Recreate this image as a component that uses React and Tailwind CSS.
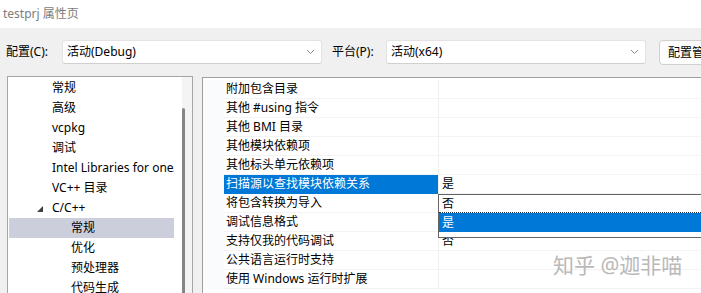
const FONT = { fontFamily: '"Noto Sans", "Noto Sans CJK SC", sans-serif' };

const treeItems = [
  { text: '常规' },
  { text: '高级' },
  { text: 'vcpkg' },
  { text: '调试' },
  { text: 'Intel Libraries for oneAPI' },
  { text: 'VC++ 目录' },
  { text: 'C/C++', expanded: true },
  { text: '常规', child: true, selected: true },
  { text: '优化', child: true },
  { text: '预处理器', child: true },
  { text: '代码生成', child: true },
];

const props = [
  { name: '附加包含目录' },
  { name: '其他 #using 指令' },
  { name: '其他 BMI 目录' },
  { name: '其他模块依赖项' },
  { name: '其他标头单元依赖项' },
  { name: '扫描源以查找模块依赖关系', value: '是', selected: true },
  { name: '将包含转换为导入' },
  { name: '调试信息格式' },
  { name: '支持仅我的代码调试', value: '否' },
  { name: '公共语言运行时支持' },
  { name: '使用 Windows 运行时扩展' },
];

const Chevron = () => (
  <svg width="9" height="6" viewBox="0 0 9 6" className="shrink-0">
    <path d="M1 1l3.5 3.5L8 1" fill="none" stroke="#8a8a8a" strokeWidth="1" />
  </svg>
);

const Combo = ({ value }) => (
  <div className="w-[260px] h-[24px] shrink-0 bg-white border border-[#e3e3e3] border-b-[#d0d0d0] rounded-[3px] flex items-center pl-[4px] pr-[6px]">
    <span className="flex-1 text-[12px] leading-[16px] text-black">{value}</span>
    <Chevron />
  </div>
);

const App = () => {
  return (
    <div className="w-[701px] h-[293px] overflow-hidden bg-[#f0f0f0] relative" style={FONT}>
      {/* Title bar */}
      <div className="h-[28px] bg-white flex items-center pl-[3px]">
        <span className="text-[12px] leading-[16px] text-[#7d7d7d]">testprj 属性页</span>
      </div>

      {/* Config row */}
      <div className="h-[48px] flex items-start pt-[12px] whitespace-nowrap">
        <div className="w-[62px] h-[24px] shrink-0 flex items-center pl-[6px]">
          <span className="text-[12px] leading-[16px] text-black">配置(C):</span>
        </div>
        <Combo value="活动(Debug)" />
        <div className="w-[64px] h-[24px] shrink-0 flex items-center pl-[10px]">
          <span className="text-[12px] leading-[16px] text-black">平台(P):</span>
        </div>
        <Combo value="活动(x64)" />
        <div className="ml-[13px] h-[25px] w-[110px] shrink-0 bg-[#fdfdfd] border border-[#d0d0d0] rounded-[4px] flex items-center pl-[8px]">
          <span className="text-[12px] leading-[16px] text-black">配置管理器...</span>
        </div>
      </div>

      {/* Main area */}
      <div className="flex items-start">
        {/* Tree panel */}
        <div className="ml-[7px] w-[186px] h-[230px] shrink-0 bg-white border border-[#a6a6a6] flex">
          <div className="w-[166px] pl-[1px] pt-[1px] overflow-hidden">
            {treeItems.map((item, i) => (
              <div
                key={i}
                className={`h-[20px] flex items-center whitespace-nowrap overflow-hidden relative ${
                  item.selected ? 'bg-[#cccedb]' : ''
                } ${item.child ? 'pl-[62px]' : 'pl-[43px]'}`}
              >
                {item.expanded && (
                  <svg width="6" height="6" viewBox="0 0 6 6" className="absolute left-[28px] top-[8px]">
                    <polygon points="6,0 6,6 0,6" fill="#404040" />
                  </svg>
                )}
                <span className="text-[12px] leading-[16px] text-black">{item.text}</span>
              </div>
            ))}
          </div>
          <div className="w-[8px]" />
          <div className="w-[10px] bg-[#f4f4f4] flex flex-col">
            <div className="w-[3px] mt-[31px] flex-1 bg-[#868686] rounded-t-full" />
          </div>
        </div>

        {/* Property grid */}
        <div className="ml-[9px] mt-[1px] flex-1 h-[230px] bg-white border-l border-t border-[#a0a0a0] pt-[2px]">
          {props.map((p, i) => (
            <div key={i} className="h-[19px] flex">
              <div className="w-[21px] shrink-0 bg-[#fafbfd]" />
              <div
                className={`w-[214px] shrink-0 flex items-center pl-[2px] whitespace-nowrap border-b ${
                  p.selected ? 'bg-[#0078d7] text-white border-[#0078d7]' : 'text-black border-[#f3f3f3]'
                }`}
              >
                <span className="text-[12px] leading-[16px]">{p.name}</span>
              </div>
              <div className="w-px shrink-0 bg-[#efefef]" />
              <div className="flex-1 flex items-center pl-[3px] border-b border-[#f3f3f3]">
                {p.value && <span className="text-[12px] leading-[16px] text-black">{p.value}</span>}
              </div>
            </div>
          ))}
        </div>
      </div>

      {/* Dropdown list */}
      <div className="absolute left-[438px] top-[194px] w-[300px] h-[44px] bg-white border border-[#646464]">
        <div className="h-[18px] flex items-center pl-[3px] border-b border-dotted border-[#333]">
          <span className="text-[12px] leading-[16px] text-black">否</span>
        </div>
        <div className="h-[19px] flex items-center pl-[3px] bg-[#0078d7]">
          <span className="text-[12px] leading-[16px] text-white">是</span>
        </div>
      </div>

      {/* Watermark */}
      <div className="absolute left-[553px] top-[253px] whitespace-nowrap">
        <span className="text-[21px] leading-[24px] text-[#a9a9a9] opacity-80">知乎 @迦非喵</span>
      </div>
    </div>
  );
};

export default App;
